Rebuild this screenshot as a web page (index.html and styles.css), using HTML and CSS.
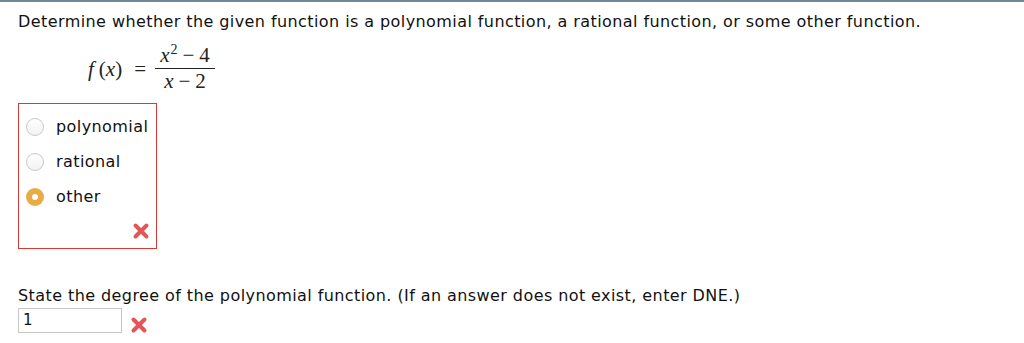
FILE: index.html
```html
<!DOCTYPE html>
<html>
<head>
<meta charset="utf-8">
<link rel="stylesheet" href="styles.css">
</head>
<body>
<div class="page">
  <p class="q">Determine whether the given function is a polynomial function, a rational function, or some other function.</p>
  <div class="math">
    <span class="lhs"><i>f</i><span class="sp"></span>(<i>x</i>)<span class="eq">=</span></span>
    <span class="frac">
      <span class="num"><i>x</i><sup>2</sup><span class="op">&minus;</span>4</span>
      <span class="den"><i>x</i><span class="op">&minus;</span>2</span>
    </span>
  </div>
  <div class="options">
    <label class="opt"><span class="radio"></span><span>polynomial</span></label>
    <label class="opt"><span class="radio"></span><span>rational</span></label>
    <label class="opt"><span class="radio checked"></span><span>other</span></label>
    <div class="mark-row">
      <svg class="xmark" viewBox="0 0 18 18" width="18" height="18"><path d="M3.5 3.5 L14.5 14.5 M14.5 3.5 L3.5 14.5" stroke="#e35656" stroke-width="4" stroke-linecap="round"/></svg>
    </div>
  </div>
  <p class="q q2">State the degree of the polynomial function. (If an answer does not exist, enter DNE.)</p>
  <div class="answer">
    <span class="input">1</span>
    <svg class="xmark" viewBox="0 0 18 18" width="18" height="18"><path d="M3.5 3.5 L14.5 14.5 M14.5 3.5 L3.5 14.5" stroke="#e35656" stroke-width="4" stroke-linecap="round"/></svg>
  </div>
</div>
</body>
</html>
```
FILE: styles.css
```css
html, body {
  margin: 0;
  padding: 0;
  background: #fff;
}
body {
  border-top: 2px solid #71869b;
  font-family: "DejaVu Sans", Verdana, sans-serif;
  font-size: 16px;
  letter-spacing: 0.42px;
  color: #111;
}
.page {
  padding: 0 18px;
}
.q {
  margin: 0;
  padding-top: 10px;
  line-height: 20px;
}
.math {
  display: flex;
  align-items: center;
  margin-left: 70px;
  margin-top: 12px;
  font-family: "Liberation Serif", "DejaVu Serif", serif;
  font-size: 21px;
  letter-spacing: 0;
  color: #222;
}
.lhs {
  display: inline-flex;
  align-items: baseline;
  padding-top: 3px;
}
.sp {
  display: inline-block;
  width: 5px;
}
.eq {
  margin: 0 9px 0 12px;
}
.frac {
  display: inline-flex;
  flex-direction: column;
  align-items: center;
  width: 60px;
}
.num {
  width: 100%;
  text-align: center;
  padding-bottom: 2px;
  border-bottom: 1px solid #222;
  line-height: 22px;
}
.num sup {
  font-size: 14px;
  vertical-align: 8px;
  line-height: 0;
  margin-left: 1px;
}
.op {
  margin: 0 5px;
}
.den {
  padding-top: 1px;
  line-height: 22px;
}
.options {
  margin-top: 11px;
  width: 139px;
  height: 146px;
  border: 1px solid #d93a36;
  display: flex;
  flex-direction: column;
  padding-top: 5px;
  box-sizing: border-box;
}
.opt {
  display: flex;
  align-items: center;
  height: 35px;
  gap: 12px;
  padding-left: 7px;
  flex: none;
}
.radio {
  width: 18px;
  height: 18px;
  border-radius: 50%;
  border: 1px solid #c9c9c9;
  box-sizing: border-box;
  background: linear-gradient(#fff, #f2f2f2);
  position: relative;
  flex: none;
}
.radio.checked {
  border: none;
  background: #e8ab45;
}
.radio.checked::after {
  content: "";
  position: absolute;
  left: 6px;
  top: 6px;
  width: 6px;
  height: 6px;
  border-radius: 50%;
  background: #fff;
}
.mark-row {
  display: flex;
  justify-content: flex-end;
  padding-right: 6px;
  margin-top: 8px;
}
.q2 {
  padding-top: 37px;
}
.answer {
  display: flex;
  align-items: flex-start;
  gap: 8px;
  margin-top: 2px;
}
.input {
  display: block;
  border: 1px solid #c6c6c6;
  box-sizing: border-box;
  width: 104px;
  height: 25px;
  padding-left: 4px;
  line-height: 23px;
  font-size: 15px;
  color: #111;
}
.answer .xmark {
  margin-top: 8px;
}
```
